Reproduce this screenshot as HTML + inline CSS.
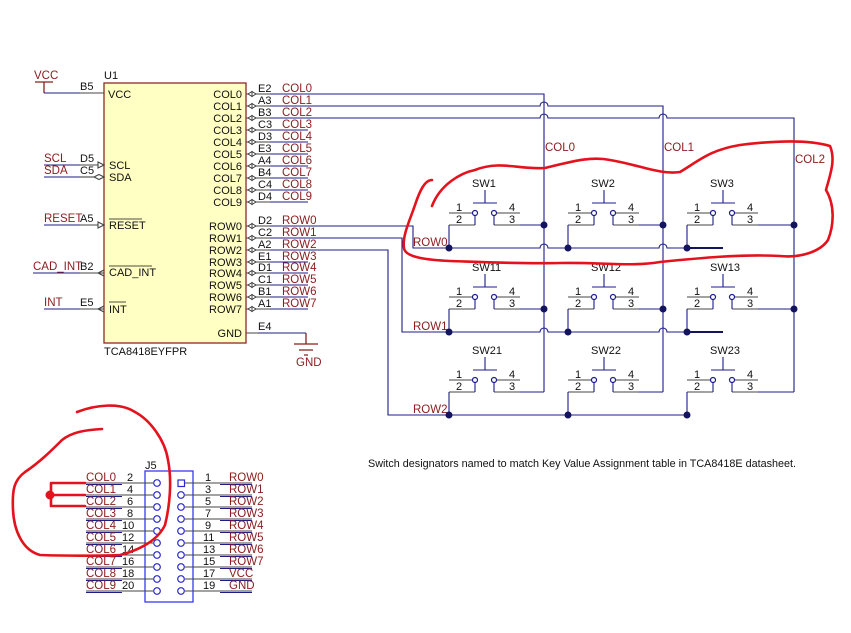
<!DOCTYPE html>
<html><head><meta charset="utf-8"><style>
html,body{margin:0;padding:0;background:#fff;}
svg{display:block;font-family:"Liberation Sans",Arial,sans-serif;}
.n{fill:#8b1c1c;font-size:11.5px;}
.k{fill:#111;font-size:11px;}
.w{stroke:#1c1c8a;stroke-width:1.1;fill:none;}
.g{stroke:#444;stroke-width:1.1;fill:none;}
.r{stroke:#8b1c1c;stroke-width:1.3;fill:none;}
.red{stroke:#e3121c;stroke-width:2.6;fill:none;stroke-linejoin:round;stroke-linecap:round;}
</style></head><body>
<svg width="851" height="633" viewBox="0 0 851 633" xmlns="http://www.w3.org/2000/svg">
<defs>
<g id="sw">
 <line class="g" x1="0" y1="-35" x2="24" y2="-35"/>
 <line class="g" x1="0" y1="-23" x2="26" y2="-23"/>
 <line class="g" x1="47" y1="-35" x2="71" y2="-35"/>
 <line class="g" x1="45" y1="-23" x2="71" y2="-23"/>
 <line class="w" x1="26" y1="-32.5" x2="26" y2="-23"/>
 <line class="w" x1="45" y1="-32.5" x2="45" y2="-23"/>
 <circle cx="26" cy="-35" r="2.5" fill="#fff" stroke="#1c1c8a" stroke-width="1.2"/>
 <circle cx="45" cy="-35" r="2.5" fill="#fff" stroke="#1c1c8a" stroke-width="1.2"/>
 <line class="w" x1="36" y1="-58" x2="36" y2="-45"/>
 <line class="w" x1="24" y1="-45" x2="48" y2="-45"/>
 <line class="w" x1="0" y1="-23" x2="0" y2="0"/>
 <circle cx="0" cy="0" r="3.5" fill="#14145e"/>
</g>
<circle id="dot" r="3.5" fill="#14145e"/>
</defs>

<rect x="104" y="83" width="142" height="260" fill="#ffffc4" stroke="#8b2a2a" stroke-width="1.3"/>
<text x="104" y="79" class="k">U1</text>
<text x="104" y="355" class="k">TCA8418EYFPR</text>

<text x="34" y="79" class="n">VCC</text>
<path class="r" d="M35 82 H53 M44 82 V93"/>
<line class="w" x1="44" y1="93" x2="80" y2="93"/>
<line class="g" x1="80" y1="93" x2="104" y2="93"/>
<text x="80" y="90" class="k">B5</text>
<text x="108" y="98" class="k">VCC</text>

<text x="44" y="162" class="n">SCL</text>
<line class="w" x1="44" y1="165" x2="80" y2="165"/><line class="g" x1="80" y1="165" x2="98" y2="165"/>
<path class="g" d="M98 162 L104 165 L98 168 Z" fill="#fff" stroke-width="1"/>
<text x="80" y="162" class="k">D5</text><text x="109" y="169" class="k">SCL</text>

<text x="44" y="174" class="n">SDA</text>
<line class="w" x1="44" y1="177" x2="80" y2="177"/><line class="g" x1="80" y1="177" x2="94" y2="177"/>
<path class="g" d="M94 177 L99 174.5 L104 177 L99 179.5 Z" fill="#fff" stroke-width="1"/>
<text x="80" y="174" class="k">C5</text><text x="109" y="181" class="k">SDA</text>

<text x="44" y="222" class="n">RESET</text>
<line class="w" x1="44" y1="225" x2="80" y2="225"/><line class="g" x1="80" y1="225" x2="98" y2="225"/>
<path class="g" d="M98 222 L104 225 L98 228 Z" fill="#fff" stroke-width="1"/>
<text x="80" y="222" class="k">A5</text><text x="109" y="229" class="k">RESET</text>
<line x1="109" y1="219" x2="142" y2="219" stroke="#111" stroke-width="0.8"/>

<text x="33" y="270" class="n">CAD_INT</text>
<line class="w" x1="33" y1="273" x2="80" y2="273"/><line class="g" x1="80" y1="273" x2="104" y2="273"/>
<path class="g" d="M104 270 L98 273 L104 276" stroke-width="1"/>
<text x="80" y="270" class="k">B2</text><text x="109" y="276" class="k">CAD_INT</text>
<line x1="109" y1="266" x2="152" y2="266" stroke="#111" stroke-width="0.8"/>

<text x="44" y="306" class="n">INT</text>
<line class="w" x1="44" y1="309" x2="80" y2="309"/><line class="g" x1="80" y1="309" x2="104" y2="309"/>
<path class="g" d="M104 306 L98 309 L104 312" stroke-width="1"/>
<text x="80" y="306" class="k">E5</text><text x="109" y="313" class="k">INT</text>
<line x1="109" y1="302" x2="126" y2="302" stroke="#111" stroke-width="0.8"/>

<g class="k" text-anchor="end">
<text x="242" y="98">COL0</text><text x="242" y="110">COL1</text><text x="242" y="122">COL2</text>
<text x="242" y="134">COL3</text><text x="242" y="146">COL4</text><text x="242" y="158">COL5</text>
<text x="242" y="170">COL6</text><text x="242" y="182">COL7</text><text x="242" y="194">COL8</text>
<text x="242" y="206">COL9</text>
<text x="242" y="230">ROW0</text><text x="242" y="242">ROW1</text><text x="242" y="254">ROW2</text>
<text x="242" y="266">ROW3</text><text x="242" y="277">ROW4</text><text x="242" y="289">ROW5</text>
<text x="242" y="301">ROW6</text><text x="242" y="313">ROW7</text>
<text x="242" y="337">GND</text>
</g>
<g class="g">
<path d="M246 94H270M246 106H270M246 118H270M246 130H270M246 142H270M246 154H270M246 166H270M246 178H270M246 190H270M246 202H270M246 226H270M246 238H270M246 250H270M246 262H270M246 273H270M246 285H270M246 297H270M246 309H270M246 333H258"/>
</g>
<g stroke="#333" stroke-width="0.9" fill="#fff">
<path d="M248 94 l4 -2.5 v5 z M256 94 l-4 -2.5 v5 z"/>
<path d="M248 106 l4 -2.5 v5 z M256 106 l-4 -2.5 v5 z"/>
<path d="M248 118 l4 -2.5 v5 z M256 118 l-4 -2.5 v5 z"/>
<path d="M248 130 l4 -2.5 v5 z M256 130 l-4 -2.5 v5 z"/>
<path d="M248 142 l4 -2.5 v5 z M256 142 l-4 -2.5 v5 z"/>
<path d="M248 154 l4 -2.5 v5 z M256 154 l-4 -2.5 v5 z"/>
<path d="M248 166 l4 -2.5 v5 z M256 166 l-4 -2.5 v5 z"/>
<path d="M248 178 l4 -2.5 v5 z M256 178 l-4 -2.5 v5 z"/>
<path d="M248 190 l4 -2.5 v5 z M256 190 l-4 -2.5 v5 z"/>
<path d="M248 202 l4 -2.5 v5 z M256 202 l-4 -2.5 v5 z"/>
<path d="M248 226 l4 -2.5 v5 z M256 226 l-4 -2.5 v5 z"/>
<path d="M248 238 l4 -2.5 v5 z M256 238 l-4 -2.5 v5 z"/>
<path d="M248 250 l4 -2.5 v5 z M256 250 l-4 -2.5 v5 z"/>
<path d="M248 262 l4 -2.5 v5 z M256 262 l-4 -2.5 v5 z"/>
<path d="M248 273 l4 -2.5 v5 z M256 273 l-4 -2.5 v5 z"/>
<path d="M248 285 l4 -2.5 v5 z M256 285 l-4 -2.5 v5 z"/>
<path d="M248 297 l4 -2.5 v5 z M256 297 l-4 -2.5 v5 z"/>
<path d="M248 309 l4 -2.5 v5 z M256 309 l-4 -2.5 v5 z"/>
</g>
<g class="k">
<text x="258" y="92">E2</text><text x="258" y="104">A3</text><text x="258" y="116">B3</text>
<text x="258" y="128">C3</text><text x="258" y="140">D3</text><text x="258" y="152">E3</text>
<text x="258" y="164">A4</text><text x="258" y="176">B4</text><text x="258" y="188">C4</text>
<text x="258" y="200">D4</text>
<text x="258" y="224">D2</text><text x="258" y="236">C2</text><text x="258" y="248">A2</text>
<text x="258" y="260">E1</text><text x="258" y="271">D1</text><text x="258" y="283">C1</text>
<text x="258" y="295">B1</text><text x="258" y="307">A1</text><text x="258" y="330">E4</text>
</g>
<g class="n">
<text x="282" y="92">COL0</text><text x="282" y="104">COL1</text><text x="282" y="116">COL2</text>
<text x="282" y="128">COL3</text><text x="282" y="140">COL4</text><text x="282" y="152">COL5</text>
<text x="282" y="164">COL6</text><text x="282" y="176">COL7</text><text x="282" y="188">COL8</text>
<text x="282" y="200">COL9</text>
<text x="282" y="224">ROW0</text><text x="282" y="236">ROW1</text><text x="282" y="248">ROW2</text>
<text x="282" y="260">ROW3</text><text x="282" y="271">ROW4</text><text x="282" y="283">ROW5</text>
<text x="282" y="295">ROW6</text><text x="282" y="307">ROW7</text>
</g>
<path class="w" d="M270 130H308M270 142H308M270 154H308M270 166H308M270 178H308M270 190H308M270 202H308M270 262H308M270 273H308M270 285H308M270 297H308M270 309H308"/>
<path class="w" d="M258 333H306"/>
<path class="r" d="M306 333V344M294 344H318M299 350H313M304 355H308"/>
<text x="296" y="366" class="n" font-size="11">GND</text>

<path class="w" d="M270 94H544V392"/>
<path class="w" d="M270 106H540a4 4 0 0 1 8 0H663V392"/>
<path class="w" d="M270 118H540a4 4 0 0 1 8 0H659a4 4 0 0 1 8 0H794V392"/>
<text x="545" y="151" class="n">COL0</text>
<text x="664" y="151" class="n">COL1</text>
<text x="795" y="163" class="n">COL2</text>
<path class="w" d="M270 226H413V248H540a4 4 0 0 1 8 0H659a4 4 0 0 1 8 0H723"/>
<path class="w" d="M270 238H402V332H540a4 4 0 0 1 8 0H659a4 4 0 0 1 8 0H723"/>
<path class="w" d="M270 250H388V415H687"/>
<path d="M687 248H723M687 332H723" stroke="#14145e" stroke-width="2"/>
<text x="413" y="246" class="n">ROW0</text>
<text x="413" y="330" class="n">ROW1</text>
<text x="413" y="413" class="n">ROW2</text>

<use href="#sw" x="449" y="248"/><use href="#sw" x="568" y="248"/><use href="#sw" x="687" y="248"/>
<use href="#sw" x="449" y="332"/><use href="#sw" x="568" y="332"/><use href="#sw" x="687" y="332"/>
<use href="#sw" x="449" y="415"/><use href="#sw" x="568" y="415"/><use href="#sw" x="687" y="415"/>
<path class="w" d="M520 225H544M639 225H663M758 225H794M520 309H544M639 309H663M758 309H794M520 392H544M639 392H663M758 392H794"/>
<use href="#dot" x="544" y="225"/><use href="#dot" x="663" y="225"/><use href="#dot" x="794" y="225"/>
<use href="#dot" x="544" y="309"/><use href="#dot" x="663" y="309"/><use href="#dot" x="794" y="309"/>
<g class="k">
<text x="472" y="187">SW1</text><text x="591" y="187">SW2</text><text x="710" y="187">SW3</text>
<text x="472" y="271">SW11</text><text x="591" y="271">SW12</text><text x="710" y="271">SW13</text>
<text x="472" y="354">SW21</text><text x="591" y="354">SW22</text><text x="710" y="354">SW23</text>
</g>
<g class="k" font-size="10.5">
<text x="456" y="211">1</text><text x="456" y="223">2</text><text x="509" y="211">4</text><text x="509" y="223">3</text>
<text x="575" y="211">1</text><text x="575" y="223">2</text><text x="628" y="211">4</text><text x="628" y="223">3</text>
<text x="694" y="211">1</text><text x="694" y="223">2</text><text x="747" y="211">4</text><text x="747" y="223">3</text>
<text x="456" y="295">1</text><text x="456" y="307">2</text><text x="509" y="295">4</text><text x="509" y="307">3</text>
<text x="575" y="295">1</text><text x="575" y="307">2</text><text x="628" y="295">4</text><text x="628" y="307">3</text>
<text x="694" y="295">1</text><text x="694" y="307">2</text><text x="747" y="295">4</text><text x="747" y="307">3</text>
<text x="456" y="378">1</text><text x="456" y="390">2</text><text x="509" y="378">4</text><text x="509" y="390">3</text>
<text x="575" y="378">1</text><text x="575" y="390">2</text><text x="628" y="378">4</text><text x="628" y="390">3</text>
<text x="694" y="378">1</text><text x="694" y="390">2</text><text x="747" y="378">4</text><text x="747" y="390">3</text>
</g>

<text x="368" y="467" class="k" font-size="10.5" textLength="428" lengthAdjust="spacingAndGlyphs">Switch designators named to match Key Value Assignment table in TCA8418E datasheet.</text>

<rect x="145" y="471" width="48" height="131" fill="none" stroke="#3a3aee" stroke-width="1.3"/>
<text x="145" y="469" class="k">J5</text>
<g class="g">
<path d="M86 483H153M86 495H153M86 507H153M86 519H153M86 531H153M86 543H153M86 555H153M86 567H153M86 579H153M86 591H153"/>
<path d="M185 483H252M185 495H252M185 507H252M185 519H252M185 531H252M185 543H252M185 555H252M185 567H252M185 579H252M185 591H252"/>
</g>
<path class="w" d="M86 484.5H122M86 496.5H122M86 508.5H122M86 520.5H122M86 532.5H122M86 544.5H122M86 556.5H122M86 568.5H122M86 580.5H122M86 592.5H122M220 484.5H252M220 496.5H252M220 508.5H252M220 520.5H252M220 532.5H252M220 544.5H252M220 556.5H252M220 568.5H252M220 580.5H252M220 592.5H252" stroke-width="1"/>
<g fill="#fff" stroke="#2a2ad0" stroke-width="1.2">
<circle cx="157" cy="483" r="3.3"/><circle cx="157" cy="495" r="3.3"/><circle cx="157" cy="507" r="3.3"/><circle cx="157" cy="519" r="3.3"/><circle cx="157" cy="531" r="3.3"/><circle cx="157" cy="543" r="3.3"/><circle cx="157" cy="555" r="3.3"/><circle cx="157" cy="567" r="3.3"/><circle cx="157" cy="579" r="3.3"/><circle cx="157" cy="591" r="3.3"/>
<rect x="178" y="480" width="6.5" height="6.5"/><circle cx="181" cy="495" r="3.3"/><circle cx="181" cy="507" r="3.3"/><circle cx="181" cy="519" r="3.3"/><circle cx="181" cy="531" r="3.3"/><circle cx="181" cy="543" r="3.3"/><circle cx="181" cy="555" r="3.3"/><circle cx="181" cy="567" r="3.3"/><circle cx="181" cy="579" r="3.3"/><circle cx="181" cy="591" r="3.3"/>
</g>
<g class="n">
<text x="86" y="481">COL0</text><text x="86" y="493">COL1</text><text x="86" y="505">COL2</text><text x="86" y="517">COL3</text><text x="86" y="529">COL4</text><text x="86" y="541">COL5</text><text x="86" y="553">COL6</text><text x="86" y="565">COL7</text><text x="86" y="577">COL8</text><text x="86" y="589">COL9</text>
<text x="229" y="481">ROW0</text><text x="229" y="493">ROW1</text><text x="229" y="505">ROW2</text><text x="229" y="517">ROW3</text><text x="229" y="529">ROW4</text><text x="229" y="541">ROW5</text><text x="229" y="553">ROW6</text><text x="229" y="565">ROW7</text><text x="229" y="577">VCC</text><text x="229" y="589">GND</text>
</g>
<g class="k">
<text x="127" y="481">2</text><text x="127" y="493">4</text><text x="127" y="505">6</text><text x="127" y="517">8</text><text x="122" y="529">10</text><text x="122" y="541">12</text><text x="122" y="553">14</text><text x="122" y="565">16</text><text x="122" y="577">18</text><text x="122" y="589">20</text>
<text x="205" y="481">1</text><text x="205" y="493">3</text><text x="205" y="505">5</text><text x="205" y="517">7</text><text x="205" y="529">9</text><text x="203" y="541">11</text><text x="203" y="553">13</text><text x="203" y="565">15</text><text x="203" y="577">17</text><text x="203" y="589">19</text>
</g>

<path class="red" d="M432 206 C440 185 460 173 475 170 C500 160 520 170 545 168 C570 162 590 156 610 160 C640 165 660 175 680 172 C700 160 710 150 740 145 C780 140 810 140 830 146 C836 160 830 175 826 190 C835 205 834 225 828 240 C820 252 800 258 780 256 C740 254 700 258 660 262 C630 267 600 262 560 263 C520 264 480 262 450 261 C430 260 405 258 404 248 C402 236 410 220 415 205 C420 190 425 180 432 180"/>
<path class="red" d="M77 412 C95 405 120 402 135 412 C150 420 165 440 168 460 C172 480 170 505 165 525 C158 540 140 550 120 555 C95 556 70 556 40 555 C22 550 14 530 13 510 C12 490 14 480 25 472 C40 462 52 450 62 440 C72 432 85 430 102 429"/>
<path class="red" d="M85 483 H51 V506 H85 M51 495 H85"/>
<circle cx="50" cy="495" r="4.5" fill="#e3121c"/>
</svg>
</body></html>
